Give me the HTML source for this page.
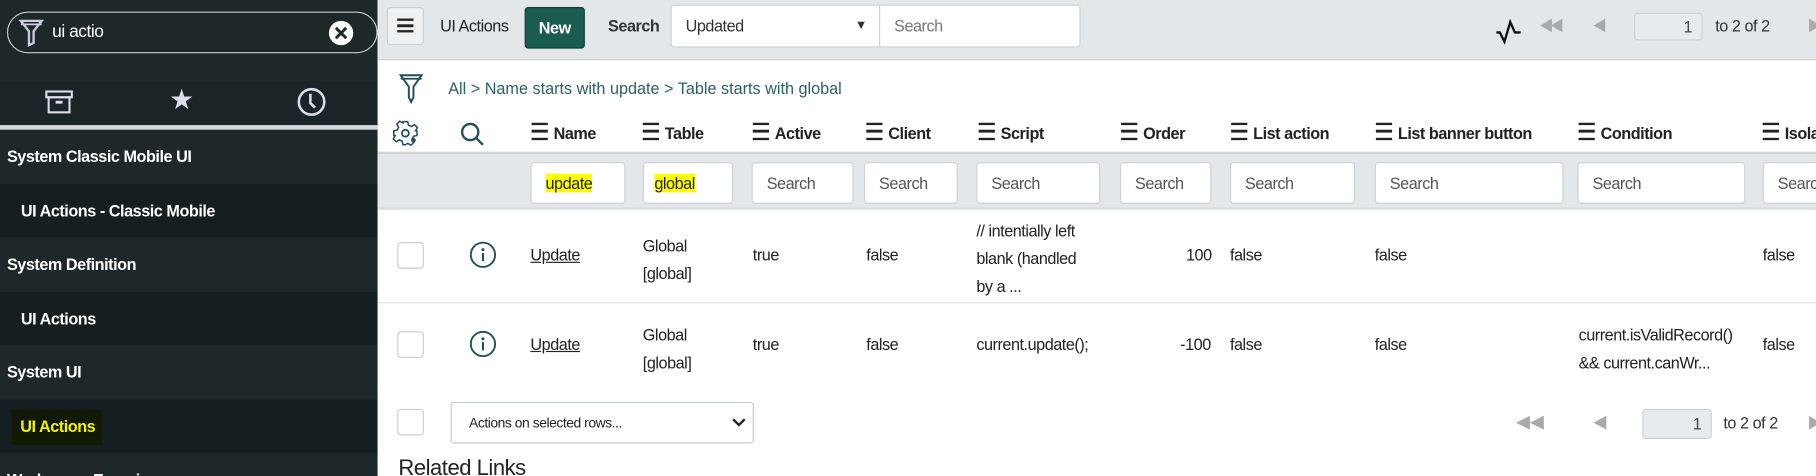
<!DOCTYPE html>
<html><head><meta charset="utf-8"><style>
*{box-sizing:border-box;margin:0;padding:0}
html,body{width:1816px;height:476px;overflow:hidden;background:#fff}
#w{position:absolute;left:0;top:0;width:1568px;height:411px;overflow:hidden;transform:scale(1.15816);transform-origin:0 0;font-family:"Liberation Sans",sans-serif;font-size:14px;color:#222;letter-spacing:-0.4px}
.a{position:absolute;white-space:nowrap}
.sb{position:absolute;left:0;top:0;width:326px;height:411px;background:#1e282b;overflow:hidden}
.row{position:absolute;left:0;width:326px;height:46.5px;color:#fff;font-weight:bold;font-size:14px;line-height:46.5px;padding-left:6px}
.ch{background:#151e21;padding-left:18px}
.inp{position:absolute;background:#fff;border:1px solid #ccd1d5;border-radius:3px;color:#555;padding-left:12px;line-height:34px;white-space:nowrap;overflow:hidden}
.hd{position:absolute;top:106px;font-weight:bold;color:#222;white-space:nowrap}
.hd:before{content:"";display:inline-block;width:14px;height:11px;border-top:2.5px solid #222;border-bottom:2.5px solid #222;background:linear-gradient(#222,#222) 0 50%/100% 2.5px no-repeat;margin-right:5px;vertical-align:-1px}
.cb{position:absolute;width:23px;height:23px;border:1px solid #c8cdd0;border-radius:3px;background:#fff}
.hl{background:#ffff00}
u{color:#222}
</style></head><body><div id="w">
<div class="sb">
 <div class="a" style="left:6px;top:10px;width:320px;height:36px;border:1px solid #c8cdd0;border-radius:18px"></div>
 <svg class="a" style="left:16px;top:16px" width="22" height="26" viewBox="0 0 22 26"><path d="M2 2h18l-7 9v10l-4 2V11z" fill="none" stroke="#ccd" stroke-width="2"/><path d="M2 5h18" stroke="#ccd" stroke-width="1.5"/></svg>
 <div class="a" style="left:45px;top:19px;color:#fff;font-size:15px">ui actio</div>
 <svg class="a" style="left:282px;top:16px" width="25" height="25"><circle cx="12.5" cy="12.5" r="10.5" fill="#fff"/><path d="M8 8l9 9M17 8l-9 9" stroke="#1e282b" stroke-width="2.5"/></svg>
 <div class="a" style="left:0;top:70px;width:326px;height:38px;background:#1b2427"></div>
 <svg class="a" style="left:38px;top:76px" width="26" height="24"><rect x="2" y="3" width="22" height="5" fill="none" stroke="#dde" stroke-width="1.8"/><rect x="4" y="8" width="18" height="13" fill="none" stroke="#dde" stroke-width="1.8"/><rect x="10" y="11" width="6" height="2.5" fill="#dde"/></svg>
 <div class="a" style="left:146px;top:72px;color:#dde;font-size:24px">★</div>
 <svg class="a" style="left:256px;top:75px" width="26" height="26"><circle cx="13" cy="13" r="11" fill="none" stroke="#dde" stroke-width="2.2"/><path d="M12 6v8l4 4" fill="none" stroke="#dde" stroke-width="2.2"/></svg>
 <div class="a" style="left:0;top:108px;width:326px;height:4px;background:#d2d6d8"></div>
 <div class="row" style="top:112px">System Classic Mobile UI</div>
 <div class="row ch" style="top:158.5px">UI Actions - Classic Mobile</div>
 <div class="row" style="top:205px">System Definition</div>
 <div class="row ch" style="top:251.5px">UI Actions</div>
 <div class="row" style="top:298px">System UI</div>
 <div class="row ch" style="top:344.5px"><span style="background:#111a00;color:#f4f400;padding:6px 6px 8px 4px;margin-left:-8px">&nbsp;UI Actions</span></div>
 <div class="row" style="top:391px">Workspace Experience</div>
</div>
<div class="a" style="left:326px;top:0;width:1242px;height:52px;background:#e4e7ea;border-bottom:1px solid #ccd0d3"></div>
<div class="a" style="left:334px;top:6px;width:32px;height:33px;border:1px solid #c8cdd0;border-radius:3px;background:#eef0f2"></div>
<div class="a" style="left:343px;top:16px;width:14px;height:12px;border-top:2.5px solid #222;border-bottom:2.5px solid #222;background:linear-gradient(#222,#222) 0 50%/100% 2.5px no-repeat"></div>
<div class="a" style="left:380px;top:14px">UI Actions</div>
<div class="a" style="left:453px;top:6px;width:52px;height:36px;background:#1a5c50;border:1px solid #0e3d35;border-radius:3px;color:#fff;font-weight:bold;text-align:center;line-height:34px">New</div>
<div class="a" style="left:525px;top:14px;font-weight:bold;color:#333">Search</div>
<div class="inp" style="left:579px;top:4px;width:181px;height:37px;border-radius:3px 0 0 3px;color:#333;overflow:visible">Updated<span class="a" style="left:158px;top:0;font-size:11px;color:#333">▼</span></div>
<div class="inp" style="left:759px;top:4px;width:174px;height:37px;border-radius:0 3px 3px 0;color:#777">Search</div>
<svg class="a" style="left:1291px;top:14px" width="26" height="26"><path d="M1 14h3l4 8 5-17 4 9h5" fill="none" stroke="#111" stroke-width="2"/></svg>
<svg class="a" style="left:1330px;top:15px" width="60" height="14"><path d="M0 7l10-6v12zM9 7l10-6v12zM46 7l10-6v12z" fill="#aaa"/></svg>
<div class="a" style="left:1411px;top:11px;width:59px;height:24px;background:#e8ebee;border:1px solid #ccd0d3;border-radius:3px;text-align:right;padding-right:8px;line-height:22px;color:#444">1</div>
<div class="a" style="left:1481px;top:14px;color:#333">to 2 of 2</div>
<svg class="a" style="left:1562px;top:15px" width="10" height="14"><path d="M0 1l10 6-10 6z" fill="#aaa"/></svg>
<svg class="a" style="left:344px;top:62px" width="22" height="28"><path d="M2 3h18l-7 10v9l-2 4-2-4v-9z" fill="none" stroke="#1f4e57" stroke-width="1.7"/><path d="M2 6h18" stroke="#1f4e57" stroke-width="1.5"/></svg>
<div class="a" style="left:387px;top:68px;color:#2c5f67;letter-spacing:0">All &gt; Name starts with update &gt; Table starts with global</div>
<svg class="a" style="left:338px;top:103px" width="24" height="24" viewBox="0 0 24 24"><circle cx="12" cy="12" r="3" fill="none" stroke="#1f4e57" stroke-width="1.5"/><path d="M10 2h4l.7 3 2.4 1.2 2.7-1.6 2.6 2.6-1.6 2.7L22 10v4l-3 .7-1.2 2.4 1.6 2.7-2.6 2.6-2.7-1.6L12 22h-2l-.7-3-2.4-1.2-2.7 1.6-2.6-2.6 1.6-2.7L2 14v-4l3-.7 1.2-2.4-1.6-2.7 2.6-2.6 2.7 1.6z" fill="none" stroke="#1f4e57" stroke-width="1.3"/><circle cx="19" cy="18" r="2" fill="#1f4e57"/></svg>
<svg class="a" style="left:396px;top:104px" width="24" height="24"><circle cx="10" cy="10" r="7" fill="none" stroke="#1f4e57" stroke-width="2"/><path d="M15 15l6 6" stroke="#1f4e57" stroke-width="2"/></svg>
<div class="hd" style="left:459px">Name</div>
<div class="hd" style="left:555px">Table</div>
<div class="hd" style="left:650px">Active</div>
<div class="hd" style="left:748px">Client</div>
<div class="hd" style="left:845px">Script</div>
<div class="hd" style="left:968px">Order</div>
<div class="hd" style="left:1063px">List action</div>
<div class="hd" style="left:1188px">List banner button</div>
<div class="hd" style="left:1363px">Condition</div>
<div class="hd" style="left:1522px">Isola</div>
<div class="a" style="left:326px;top:131px;width:1242px;height:50px;background:#e4e7ea;border-top:2px solid #cfd3d6;border-bottom:2px solid #d8dcdf"></div>
<div class="inp" style="left:458px;top:140px;width:82px;height:36px;color:#222"><span class="hl">update</span></div>
<div class="inp" style="left:555px;top:140px;width:78px;height:36px;color:#222;padding-left:9px"><span class="hl">global</span></div>
<div class="inp" style="left:649px;top:140px;width:88px;height:36px">Search</div>
<div class="inp" style="left:746px;top:140px;width:81px;height:36px">Search</div>
<div class="inp" style="left:843px;top:140px;width:107px;height:36px">Search</div>
<div class="inp" style="left:967px;top:140px;width:79px;height:36px">Search</div>
<div class="inp" style="left:1062px;top:140px;width:108px;height:36px">Search</div>
<div class="inp" style="left:1187px;top:140px;width:163px;height:36px">Search</div>
<div class="inp" style="left:1362px;top:140px;width:145px;height:36px">Search</div>
<div class="inp" style="left:1522px;top:140px;width:60px;height:36px">Search</div>
<div class="a" style="left:326px;top:261px;width:1242px;height:1px;background:#e2e5e7"></div>
<div class="cb" style="left:343px;top:209px"></div>
<svg class="a" style="left:405px;top:208px" width="24" height="24"><circle cx="12" cy="12" r="10.5" fill="none" stroke="#1f4e57" stroke-width="1.6"/><circle cx="12" cy="7.5" r="1.3" fill="#1f4e57"/><path d="M12 10.5v7" stroke="#1f4e57" stroke-width="1.8"/></svg>
<div class="a" style="left:458px;top:212px"><u>Update</u></div>
<div class="a" style="left:555px;top:200px;line-height:24px">Global<br>[global]</div>
<div class="a" style="left:650px;top:212px">true</div>
<div class="a" style="left:748px;top:212px">false</div>
<div class="a" style="left:843px;top:187px;line-height:24px">// intentially left<br>blank (handled<br>by a ...</div>
<div class="a" style="left:1024px;top:212px">100</div>
<div class="a" style="left:1062px;top:212px">false</div>
<div class="a" style="left:1187px;top:212px">false</div>
<div class="a" style="left:1522px;top:212px">false</div>
<div class="cb" style="left:343px;top:286px"></div>
<svg class="a" style="left:405px;top:285px" width="24" height="24"><circle cx="12" cy="12" r="10.5" fill="none" stroke="#1f4e57" stroke-width="1.6"/><circle cx="12" cy="7.5" r="1.3" fill="#1f4e57"/><path d="M12 10.5v7" stroke="#1f4e57" stroke-width="1.8"/></svg>
<div class="a" style="left:458px;top:289px"><u>Update</u></div>
<div class="a" style="left:555px;top:277px;line-height:24px">Global<br>[global]</div>
<div class="a" style="left:650px;top:289px">true</div>
<div class="a" style="left:748px;top:289px">false</div>
<div class="a" style="left:843px;top:289px">current.update();</div>
<div class="a" style="left:1019px;top:289px">-100</div>
<div class="a" style="left:1062px;top:289px">false</div>
<div class="a" style="left:1187px;top:289px">false</div>
<div class="a" style="left:1363px;top:277px;line-height:24px">current.isValidRecord()<br>&amp;&amp; current.canWr...</div>
<div class="a" style="left:1522px;top:289px">false</div>
<div class="cb" style="left:343px;top:353px"></div>
<div class="a" style="left:389px;top:347px;width:262px;height:36px;border:1px solid #c8cdd0;border-radius:3px;font-size:12px;line-height:34px;padding-left:15px;color:#222">Actions on selected rows...<svg class="a" style="left:242px;top:13px" width="12" height="9"><path d="M1 1l5 5 5-5" fill="none" stroke="#222" stroke-width="2"/></svg></div>
<svg class="a" style="left:1309px;top:358px" width="80" height="14"><path d="M0 7l12-6v12zM12 7l12-6v12zM67 7l11-6v12z" fill="#aaa"/></svg>
<div class="a" style="left:1418px;top:353px;width:60px;height:26px;background:#e8ebee;border:1px solid #ccd0d3;border-radius:3px;text-align:right;padding-right:8px;line-height:24px;color:#444">1</div>
<div class="a" style="left:1488px;top:357px;color:#333">to 2 of 2</div>
<svg class="a" style="left:1562px;top:358px" width="10" height="14"><path d="M0 1l10 6-10 6z" fill="#aaa"/></svg>
<div class="a" style="left:344px;top:394px;font-size:19px;color:#222">Related Links</div>
</div></body></html>
